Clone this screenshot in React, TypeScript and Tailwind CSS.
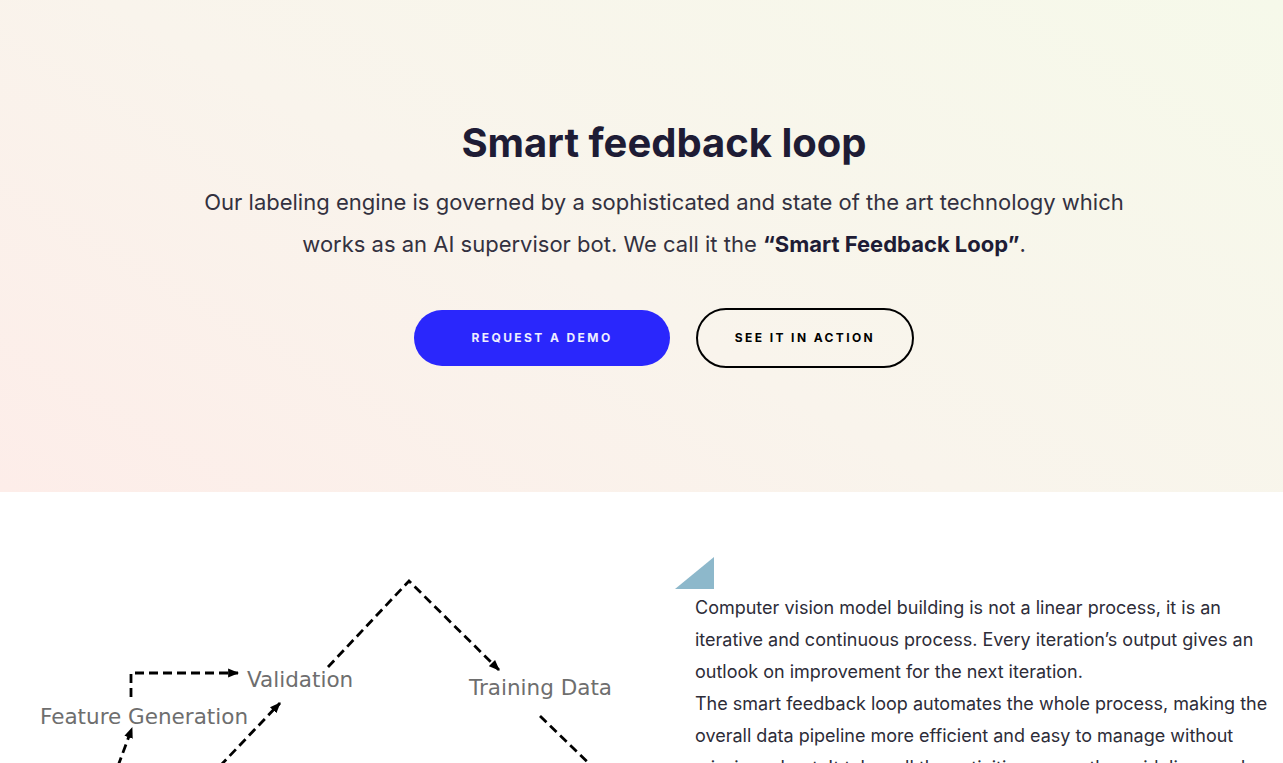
import React from "react";

function Diagram() {
  const dash = "9 5";
  return (
    <svg width="675" height="300" viewBox="0 0 675 300" className="block shrink-0">
      <defs>
        <marker id="ah" viewBox="0 0 10 10" refX="9" refY="5" markerWidth="11" markerHeight="11" markerUnits="userSpaceOnUse" orient="auto">
          <path d="M0 1 L10 5 L0 9 Z" fill="#000" />
        </marker>
      </defs>
      <g fill="none" stroke="#000" strokeWidth="2.8" strokeDasharray={dash}>
        <polyline points="328,175 409,89 499,178" markerEnd="url(#ah)" />
        <polyline points="131,205 131,181 238,181" markerEnd="url(#ah)" />
        <line x1="118" y1="274" x2="132" y2="236" markerEnd="url(#ah)" />
        <line x1="220" y1="274" x2="280" y2="211" markerEnd="url(#ah)" />
        <line x1="540" y1="224" x2="600" y2="282" />
      </g>
      <g fill="#6e6e6e" style={{ fontFamily: '"DejaVu Sans", sans-serif', fontSize: "21.5px" }}>
        <text x="247" y="195">Validation</text>
        <text x="469" y="203">Training Data</text>
        <text x="40" y="232">Feature Generation</text>
      </g>
    </svg>
  );
}

export default function App() {
  return (
    <div className="min-h-screen bg-white font-['Inter',sans-serif]">
      <section className="h-[492px] bg-[linear-gradient(30deg,#fdede9_0%,#f9f4ec_45%,#f6f9ea_100%)] flex flex-col items-center pt-[119px] pl-[45px]">
        <h1 className="text-[40px] leading-[48px] font-bold text-[#1e1c35]">Smart feedback loop</h1>
        <p className="mt-[14px] w-[940px] text-center text-[22px] leading-[42px] text-[#33313f]">
          Our labeling engine is governed by a sophisticated and state of the art technology which works as an AI supervisor bot. We call it the <strong className="font-bold text-[#1e1c35]">“Smart Feedback Loop”</strong>.
        </p>
        <div className="mt-[43px] flex items-center gap-[26px]">
          <button className="w-[256px] h-[56px] rounded-full bg-[#2a27fc] text-[#eeeeff] text-[12px] font-bold tracking-[2.4px]">REQUEST A DEMO</button>
          <button className="w-[218px] h-[60px] rounded-full border-2 border-black text-black text-[12px] font-bold tracking-[2.4px]">SEE IT IN ACTION</button>
        </div>
      </section>
      <section className="flex">
        <Diagram />
        <div className="pt-[65px] w-[608px]">
          <svg width="39" height="32" viewBox="0 0 39 32" className="block">
            <path d="M0 32 L39 0 L39 32 Z" fill="#8db8cb" />
          </svg>
          <div className="mt-[3px] pl-[20px] w-[608px] text-[18px] leading-[32px] text-[#2d2c38]">
            <p>Computer vision model building is not a linear process, it is an iterative and continuous process. Every iteration’s output gives an outlook on improvement for the next iteration.</p>
            <p>The smart feedback loop automates the whole process, making the overall data pipeline more efficient and easy to manage without missing a beat. It takes all the activities as per the guidelines and</p>
          </div>
        </div>
      </section>
    </div>
  );
}
